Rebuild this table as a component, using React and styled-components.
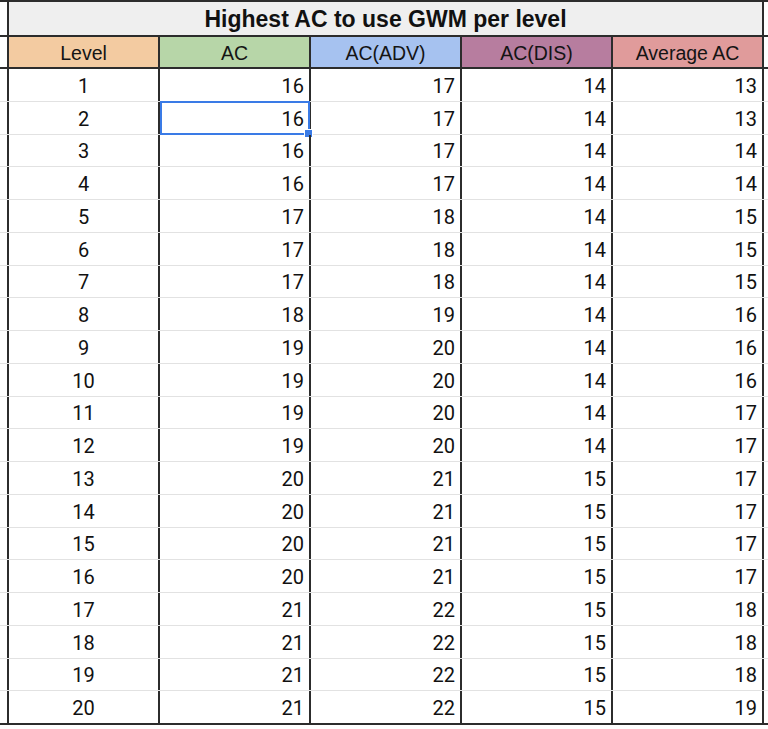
import styled, { createGlobalStyle } from "styled-components";

const GlobalStyle = createGlobalStyle`
  html, body {
    margin: 0;
    padding: 0;
    background: #ffffff;
  }
  body {
    font-family: "Liberation Sans", Arial, sans-serif;
    color: #111;
  }
`;

const COLUMNS = [
  { name: "Level", color: "#f3cba1" },
  { name: "AC", color: "#b7d6a8" },
  { name: "AC(ADV)", color: "#a6c2f0" },
  { name: "AC(DIS)", color: "#b77d9f" },
  { name: "Average AC", color: "#e09b9b" },
];

const DATA = [
  [1, 16, 17, 14, 13],
  [2, 16, 17, 14, 13],
  [3, 16, 17, 14, 14],
  [4, 16, 17, 14, 14],
  [5, 17, 18, 14, 15],
  [6, 17, 18, 14, 15],
  [7, 17, 18, 14, 15],
  [8, 18, 19, 14, 16],
  [9, 19, 20, 14, 16],
  [10, 19, 20, 14, 16],
  [11, 19, 20, 14, 17],
  [12, 19, 20, 14, 17],
  [13, 20, 21, 15, 17],
  [14, 20, 21, 15, 17],
  [15, 20, 21, 15, 17],
  [16, 20, 21, 15, 17],
  [17, 21, 22, 15, 18],
  [18, 21, 22, 15, 18],
  [19, 21, 22, 15, 18],
  [20, 21, 22, 15, 19],
];

const DARK = "2px solid #2c2c2c";

const App = () => {
  return (
    <>
      <GlobalStyle />
      <Sheet>
        <Row $height={35} $line={DARK}>
          <Gutter />
          <Title>Highest AC to use GWM per level</Title>
          <Gutter />
        </Row>
        <Row $height={32} $line={DARK}>
          <Gutter />
          {COLUMNS.map((col) => (
            <HeadCell key={col.name} $bg={col.color}>
              {col.name}
            </HeadCell>
          ))}
          <Gutter />
        </Row>
        {DATA.map((row, i) => {
          const last = i === DATA.length - 1;
          return (
            <Row
              key={row[0]}
              $height={last ? 33.75 : 32.75}
              $line={last ? DARK : "1px solid #e2e2e2"}
            >
              <Gutter />
              {row.map((value, j) => (
                <Cell key={j} $center={j === 0}>
                  {value}
                  {i === 1 && j === 1 && (
                    <>
                      <Selection />
                      <Handle />
                    </>
                  )}
                </Cell>
              ))}
              <Gutter />
            </Row>
          );
        })}
      </Sheet>
    </>
  );
};

const Sheet = styled.div`
  display: flex;
  flex-direction: column;
  width: 768px;
  border-top: ${DARK};
  box-sizing: border-box;
`;

const Row = styled.div`
  display: grid;
  grid-template-columns: 9px repeat(5, 151px) 1fr;
  height: ${(p) => p.$height}px;
  border-bottom: ${(p) => p.$line};
  box-sizing: border-box;
`;

const Gutter = styled.div`
  box-sizing: border-box;
  &:first-child {
    border-right: ${DARK};
  }
`;

const Title = styled.div`
  grid-column: span 5;
  display: flex;
  align-items: center;
  justify-content: center;
  padding-top: 1px;
  background: #efefef;
  border-right: ${DARK};
  box-sizing: border-box;
  font-size: 23px;
  font-weight: 700;
  color: #111;
`;

const HeadCell = styled.div`
  display: flex;
  align-items: center;
  justify-content: center;
  padding-top: 2px;
  background: ${(p) => p.$bg};
  border-right: ${DARK};
  box-sizing: border-box;
  font-size: 19.5px;
  color: #141414;
`;

const Cell = styled.div`
  position: relative;
  display: flex;
  align-items: center;
  justify-content: ${(p) => (p.$center ? "center" : "flex-end")};
  padding: 2px 5px 0 ${(p) => (p.$center ? "5px" : "0")};
  border-right: ${DARK};
  box-sizing: border-box;
  font-family: Roboto, "Liberation Sans", Arial, sans-serif;
  font-size: 20px;
  color: #111;
`;

const Selection = styled.div`
  position: absolute;
  left: 0;
  top: -1px;
  right: -1px;
  bottom: -1px;
  border: 2px solid #3a7be6;
  pointer-events: none;
`;

const Handle = styled.div`
  position: absolute;
  right: -4px;
  bottom: -4px;
  width: 7px;
  height: 7px;
  background: #3a7be6;
  border: 1px solid #ffffff;
`;

export default App;
